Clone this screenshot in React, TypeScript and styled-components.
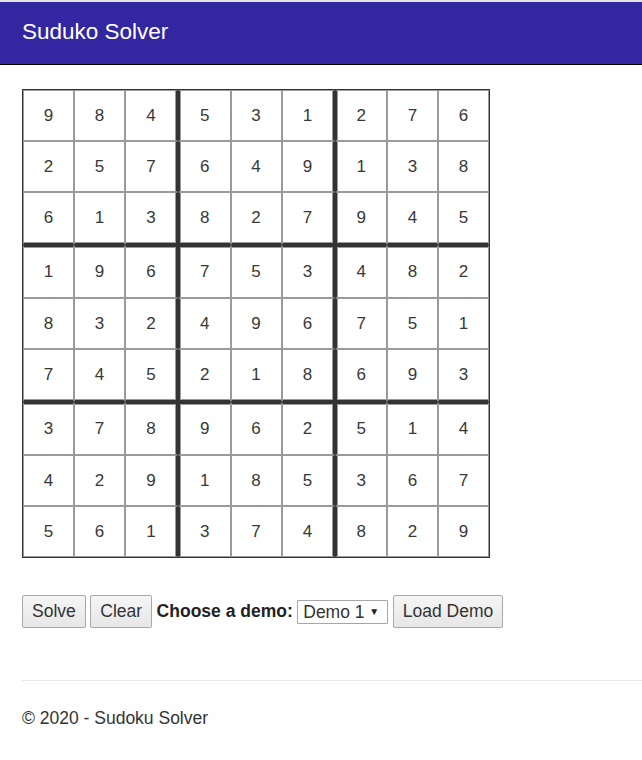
import React from "react";
import styled, { createGlobalStyle, css } from "styled-components";

const GlobalStyle = createGlobalStyle`
  html, body {
    margin: 0;
    padding: 0;
    background: #ffffff;
    font-family: "Liberation Sans", Arial, sans-serif;
    color: #333333;
  }
  * { box-sizing: content-box; }
`;

const Page = styled.div`
  width: 642px;
  min-height: 760px;
  overflow: hidden;
`;

const Header = styled.header`
  height: 62px;
  background: #3227a0;
  border-top: 2px solid #e4e4e8;
  border-bottom: 1px solid #000000;
  display: flex;
  align-items: center;
  padding-left: 22px;
`;

const Brand = styled.h1`
  margin: 0;
  font-size: 22.5px;
  font-weight: 400;
  color: #ffffff;
  line-height: 1;
  padding-bottom: 2px;
`;

const Main = styled.main`
  padding: 24px 0 0 22px;
`;

const Board = styled.table`
  border-collapse: separate;
  border-spacing: 0;
  border: 1px solid #333333;
`;

type CellProps = {
  $tl?: boolean;
  $tr?: boolean;
  $tt?: boolean;
  $tb?: boolean;
};

const Cell = styled.td<CellProps>`
  width: 49px;
  height: 49px;
  padding: 0;
  border: 1px solid #9a9a9a;
  text-align: center;
  vertical-align: middle;
  font-size: 17px;
  color: #383838;
  ${(p) => p.$tr && css`
    width: 50px;
    border-right: 2px solid #333333;
  `}
  ${(p) => p.$tl && css`
    width: 49.5px;
    border-left: 2px solid #333333;
  `}
  ${(p) => p.$tb && css`
    height: 50px;
    border-bottom: 2px solid #333333;
  `}
  ${(p) => p.$tt && css`
    height: 50px;
    border-top: 2px solid #333333;
  `}
  ${(p) => {
    const s: string[] = [];
    if (p.$tr) s.push("inset -1px 0 0 #9a9a9a");
    if (p.$tl) s.push("inset 1px 0 0 #9a9a9a");
    if (p.$tb) s.push("inset 0 -1px 0 #9a9a9a");
    if (p.$tt) s.push("inset 0 1px 0 #9a9a9a");
    return s.length ? css`box-shadow: ${s.join(", ")};` : "";
  }}
`;

const Controls = styled.div`
  display: flex;
  align-items: center;
  gap: 4.5px;
  margin-top: 37px;
`;

const Button = styled.button`
  font-family: "Liberation Sans", Arial, sans-serif;
  font-size: 17.5px;
  line-height: 19px;
  color: #333333;
  padding: 6px 9px 6px;
  border: 1px solid #a8a8a8;
  border-radius: 2px;
  background: linear-gradient(#f6f6f6, #e6e6e6);
  margin: 0;
`;

const Label = styled.label`
  font-size: 17.5px;
  font-weight: 700;
  color: #222222;
`;

const SelectWrap = styled.span`
  position: relative;
  display: inline-flex;
`;

const Select = styled.select`
  appearance: none;
  -webkit-appearance: none;
  font-family: "Liberation Sans", Arial, sans-serif;
  font-size: 17.5px;
  line-height: 20px;
  color: #333333;
  background: #ffffff;
  border: 1px solid #a6a6a6;
  border-radius: 1px;
  padding: 1px 22px 1px 5px;
  margin: 0;
  width: 62px;
`;

const Arrow = styled.span`
  position: absolute;
  right: 9px;
  top: 50%;
  transform: translateY(-50%);
  font-size: 10px;
  line-height: 1;
  color: #222222;
  pointer-events: none;
`;

const Rule = styled.hr`
  margin: 52px 0 0 0;
  border: 0;
  border-top: 1px solid #e8e8e8;
  width: 640px;
`;

const Footer = styled.footer`
  padding-top: 27px;
  font-size: 17.5px;
  line-height: 20px;
  color: #333333;
`;

const grid = [
  "984531276",
  "257649138",
  "613827945",
  "196753482",
  "832496751",
  "745218693",
  "378962514",
  "429185367",
  "561374829",
];

export default function App() {
  return (
    <Page>
      <GlobalStyle />
      <Header>
        <Brand>Suduko Solver</Brand>
      </Header>
      <Main>
        <Board>
          <tbody>
            {grid.map((row, r) => (
              <tr key={r}>
                {row.split("").map((d, c) => (
                  <Cell
                    key={c}
                    $tr={c === 2 || c === 5}
                    $tl={c === 3 || c === 6}
                    $tb={r === 2 || r === 5}
                    $tt={r === 3 || r === 6}
                  >
                    {d}
                  </Cell>
                ))}
              </tr>
            ))}
          </tbody>
        </Board>
        <Controls>
          <Button>Solve</Button>
          <Button>Clear</Button>
          <Label>Choose a demo:</Label>
          <SelectWrap>
            <Select defaultValue="1">
              <option value="1">Demo 1</option>
              <option value="2">Demo 2</option>
              <option value="3">Demo 3</option>
            </Select>
            <Arrow>▼</Arrow>
          </SelectWrap>
          <Button>Load Demo</Button>
        </Controls>
        <Rule />
        <Footer>© 2020 - Sudoku Solver</Footer>
      </Main>
    </Page>
  );
}
